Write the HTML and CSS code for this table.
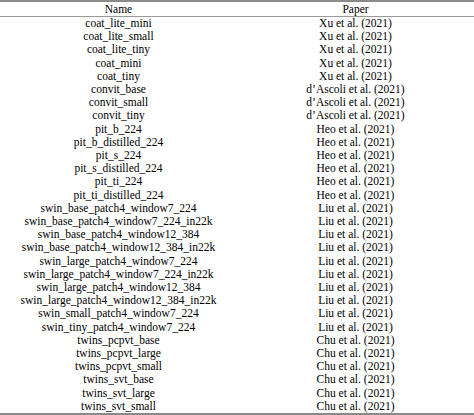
FILE: index.html
```html
<!DOCTYPE html>
<html>
<head>
<meta charset="utf-8">
<link rel="stylesheet" href="styles.css">
</head>
<body>
<table class="models">
<thead>
<tr><th>Name</th><th>Paper</th></tr>
</thead>
<tbody>
<tr><td>coat_lite_mini</td><td>Xu et al. (2021)</td></tr>
<tr><td>coat_lite_small</td><td>Xu et al. (2021)</td></tr>
<tr><td>coat_lite_tiny</td><td>Xu et al. (2021)</td></tr>
<tr><td>coat_mini</td><td>Xu et al. (2021)</td></tr>
<tr><td>coat_tiny</td><td>Xu et al. (2021)</td></tr>
<tr><td>convit_base</td><td>d’Ascoli et al. (2021)</td></tr>
<tr><td>convit_small</td><td>d’Ascoli et al. (2021)</td></tr>
<tr><td>convit_tiny</td><td>d’Ascoli et al. (2021)</td></tr>
<tr><td>pit_b_224</td><td>Heo et al. (2021)</td></tr>
<tr><td>pit_b_distilled_224</td><td>Heo et al. (2021)</td></tr>
<tr><td>pit_s_224</td><td>Heo et al. (2021)</td></tr>
<tr><td>pit_s_distilled_224</td><td>Heo et al. (2021)</td></tr>
<tr><td>pit_ti_224</td><td>Heo et al. (2021)</td></tr>
<tr><td>pit_ti_distilled_224</td><td>Heo et al. (2021)</td></tr>
<tr><td>swin_base_patch4_window7_224</td><td>Liu et al. (2021)</td></tr>
<tr><td>swin_base_patch4_window7_224_in22k</td><td>Liu et al. (2021)</td></tr>
<tr><td>swin_base_patch4_window12_384</td><td>Liu et al. (2021)</td></tr>
<tr><td>swin_base_patch4_window12_384_in22k</td><td>Liu et al. (2021)</td></tr>
<tr><td>swin_large_patch4_window7_224</td><td>Liu et al. (2021)</td></tr>
<tr><td>swin_large_patch4_window7_224_in22k</td><td>Liu et al. (2021)</td></tr>
<tr><td>swin_large_patch4_window12_384</td><td>Liu et al. (2021)</td></tr>
<tr><td>swin_large_patch4_window12_384_in22k</td><td>Liu et al. (2021)</td></tr>
<tr><td>swin_small_patch4_window7_224</td><td>Liu et al. (2021)</td></tr>
<tr><td>swin_tiny_patch4_window7_224</td><td>Liu et al. (2021)</td></tr>
<tr><td>twins_pcpvt_base</td><td>Chu et al. (2021)</td></tr>
<tr><td>twins_pcpvt_large</td><td>Chu et al. (2021)</td></tr>
<tr><td>twins_pcpvt_small</td><td>Chu et al. (2021)</td></tr>
<tr><td>twins_svt_base</td><td>Chu et al. (2021)</td></tr>
<tr><td>twins_svt_large</td><td>Chu et al. (2021)</td></tr>
<tr><td>twins_svt_small</td><td>Chu et al. (2021)</td></tr>
</tbody>
</table>
</body>
</html>
```

FILE: styles.css
```css
html, body {
  margin: 0;
  padding: 0;
  background: #fff;
}
.models {
  width: 474px;
  border-collapse: collapse;
  table-layout: fixed;
  font-family: "Liberation Serif", "Times New Roman", serif;
  font-size: 11.5px;
  color: #000;
  border-top: 2px solid #8a8a8a;
  border-bottom: 2px solid #8a8a8a;
}
.models th,
.models td {
  width: 50%;
  padding: 0;
  text-align: center;
  font-weight: normal;
  white-space: nowrap;
}
.models th {
  height: 14px;
  line-height: 14px;
  border-bottom: 1px solid #9a9a9a;
}
.models td {
  height: 13.2px;
  line-height: 13.2px;
}
```
